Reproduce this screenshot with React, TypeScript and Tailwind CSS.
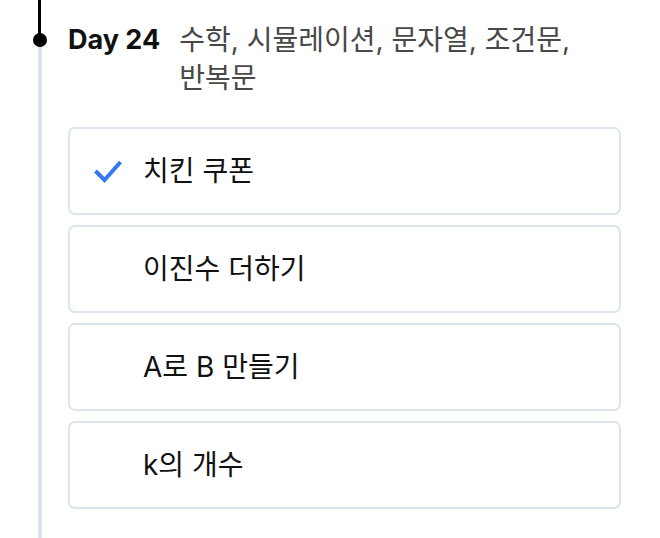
import { ReactNode } from 'react';

const problems = [
  { id: 1, title: '치킨 쿠폰', solved: true },
  { id: 2, title: '이진수 더하기', solved: false },
  { id: 3, title: 'A로 B 만들기', solved: false },
  { id: 4, title: 'k의 개수', solved: false },
];

function CheckMark() {
  return (
    <svg width="30" height="26" viewBox="0 0 30 26" fill="none">
      <polyline
        points="2.5,13 11.5,22 27.5,4"
        stroke="#3478f6"
        strokeWidth="4"
        strokeLinecap="butt"
        strokeLinejoin="miter"
      />
    </svg>
  );
}

function ProblemCard({ children, solved }: { children: ReactNode; solved: boolean }) {
  return (
    <div className="h-[88px] flex items-center pl-[23px] border-2 border-[#dce4ed] rounded-[7px] bg-white">
      <div className="w-[50px] flex items-center">{solved && <CheckMark />}</div>
      <span className="text-[28px] text-[#111]">{children}</span>
    </div>
  );
}

export default function App() {
  return (
    <div
      className="flex h-[538px] bg-white overflow-hidden"
      style={{ fontFamily: 'Inter, "Noto Sans CJK KR", sans-serif' }}
    >
      {/* timeline */}
      <div className="relative ml-[38px] w-[4px] flex flex-col">
        <div className="h-[40px] w-[3px] bg-black" />
        <div className="flex-1 w-[4px] bg-[#dbe3ec]" />
        <div className="absolute left-1/2 top-[40px] -translate-x-1/2 -translate-y-1/2 w-[14px] h-[14px] rounded-full bg-black" />
      </div>

      <div className="ml-[26px] w-[553px] flex flex-col">
        <div className="mt-[21px] flex leading-[38px]">
          <div className="font-bold text-[27px] text-[#111] shrink-0 pr-[19px]">Day 24</div>
          <div className="text-[28px] text-[#484848] break-keep">수학, 시뮬레이션, 문자열, 조건문, 반복문</div>
        </div>

        <div className="mt-[30px] flex flex-col gap-[10px]">
          {problems.map(p => (
            <ProblemCard key={p.id} solved={p.solved}>
              {p.title}
            </ProblemCard>
          ))}
        </div>
      </div>
    </div>
  );
}
